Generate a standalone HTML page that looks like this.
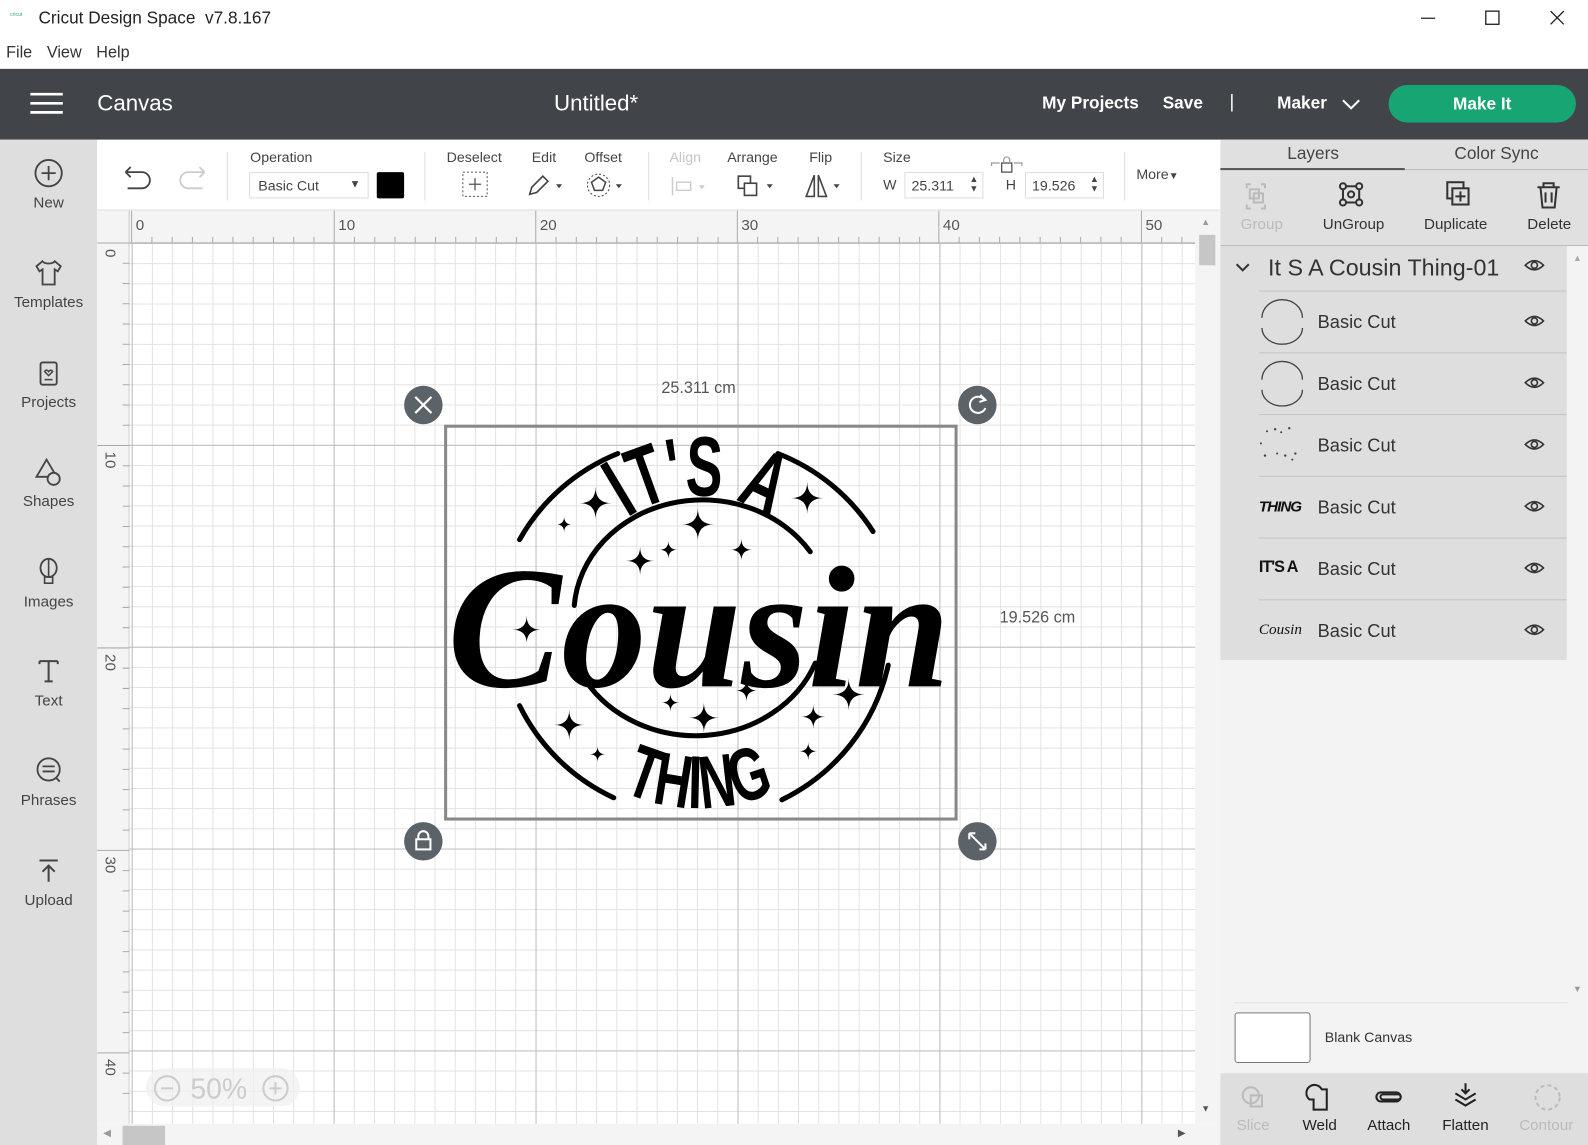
<!DOCTYPE html>
<html><head><meta charset="utf-8">
<style>
*{box-sizing:border-box;margin:0;padding:0}
html,body{width:1588px;height:1145px;overflow:hidden;background:#fff;font-family:"Liberation Sans",sans-serif;color:#333}
#root{position:absolute;left:0;top:0;width:1568px;height:1131px;transform:scale(1.0128,1.0124);transform-origin:0 0;}
.a{position:absolute}
.side{left:0;top:138px;width:96px;height:993px;background:#dedede}
.sitem{position:absolute;left:0;width:96px;text-align:center;font-size:15px;color:#444}
.sitem svg{display:block;margin:0 auto 6px}
.tb{font-size:14px;color:#444}
.grid{left:128px;top:240px;width:1052px;height:870px;
background-color:#fff;
background-image:
linear-gradient(to right,#bdbdbd 1px,transparent 1px),
linear-gradient(to bottom,#bdbdbd 1px,transparent 1px),
linear-gradient(to right,#e2e2e2 1px,transparent 1px),
linear-gradient(to bottom,#e2e2e2 1px,transparent 1px);
background-size:199.4px 199.4px,199.4px 199.4px,19.94px 19.94px,19.94px 19.94px;
background-position:2px 0,0 0,2px 0,0 0;}
.layer{position:absolute;left:38px;width:304px;height:61px;border-top:1px solid #c4c4c4}
.layer .t{position:absolute;left:58px;top:20px;font-size:18px;color:#333}
.eye{position:absolute}
</style></head><body><div id="root">

<div class="a" style="left:10px;top:12px;width:18px;height:10px;font-size:5px;color:#3a8">cricut</div>
<div class="a" style="left:38px;top:8px;font-size:17px;color:#222">Cricut Design Space&nbsp; v7.8.167</div>
<svg class="a" style="left:1395px;top:5px" width="160" height="26"><path d="M8 13h14" stroke="#222" stroke-width="1.3"/><rect x="72" y="6" width="13" height="13" fill="none" stroke="#222" stroke-width="1.3"/><path d="M136 6l13 13M149 6l-13 13" stroke="#222" stroke-width="1.3"/></svg>
<div class="a" style="left:6px;top:44px;font-size:16px;color:#333;word-spacing:10px">File View Help</div>

<div class="a" style="left:0;top:68px;width:1568px;height:70px;background:#414549"></div>
<svg class="a" style="left:28px;top:90px" width="36" height="24"><path d="M2 3h32M2 12h32M2 21h32" stroke="#fff" stroke-width="2.6"/></svg>
<div class="a" style="left:96px;top:89px;font-size:22px;color:#fff">Canvas</div>
<div class="a" style="left:547px;top:89px;font-size:22px;color:#fff">Untitled*</div>
<div class="a" style="left:1029px;top:92px;font-size:17px;color:#fff;font-weight:bold">My Projects</div>
<div class="a" style="left:1148px;top:92px;font-size:17px;color:#fff;font-weight:bold">Save</div>
<div class="a" style="left:1214px;top:90px;font-size:18px;color:#fff">|</div>
<div class="a" style="left:1261px;top:92px;font-size:17px;color:#fff;font-weight:bold">Maker</div>
<svg class="a" style="left:1324px;top:96px" width="20" height="14"><path d="M2 3l8 8 8-8" stroke="#fff" stroke-width="2" fill="none"/></svg>
<div class="a" style="left:1371px;top:84px;width:185px;height:37px;border-radius:19px;background:#17a673;color:#fff;font-weight:bold;font-size:17px;text-align:center;line-height:37px">Make It</div>

<div class="a side"></div>
<div class="sitem" style="top:156px"><svg width="30" height="30"><circle cx="15" cy="15" r="13" fill="none" stroke="#444" stroke-width="1.8"/><path d="M15 8v14M8 15h14" stroke="#444" stroke-width="1.8"/></svg>New</div>
<div class="sitem" style="top:254px"><svg width="30" height="30"><path d="M9 4l-6 5 3 5 3-2v15h12V12l3 2 3-5-6-5c-2 3-10 3-12 0z" fill="none" stroke="#444" stroke-width="1.8"/></svg>Templates</div>
<div class="sitem" style="top:353px"><svg width="30" height="30"><rect x="7" y="5" width="16" height="22" rx="2" fill="none" stroke="#444" stroke-width="1.8"/><path d="M11 14c2-3 4 0 4 0s2-3 4 0l-4 4z" fill="none" stroke="#444" stroke-width="1.5"/><path d="M11 22h8" stroke="#444" stroke-width="1.5"/></svg>Projects</div>
<div class="sitem" style="top:451px"><svg width="30" height="30"><path d="M13 3L3 20h20z" fill="none" stroke="#444" stroke-width="1.8"/><circle cx="20" cy="22" r="6" fill="#dedede" stroke="#444" stroke-width="1.8"/></svg>Shapes</div>
<div class="sitem" style="top:550px"><svg width="30" height="30"><ellipse cx="15" cy="11" rx="8" ry="9" fill="none" stroke="#444" stroke-width="1.8"/><path d="M15 2v18M11 20h8v6h-8z" fill="none" stroke="#444" stroke-width="1.6"/></svg>Images</div>
<div class="sitem" style="top:648px"><svg width="30" height="30"><path d="M6 5h18M15 5v20M6 5v3M24 5v3M11 25h8" fill="none" stroke="#444" stroke-width="2"/></svg>Text</div>
<div class="sitem" style="top:746px"><svg width="30" height="30"><circle cx="15" cy="14" r="11" fill="none" stroke="#444" stroke-width="1.8"/><path d="M9 11h12M9 16h12M22 22l4 4" stroke="#444" stroke-width="1.8"/></svg>Phrases</div>
<div class="sitem" style="top:845px"><svg width="30" height="30"><path d="M6 5h18M15 26V10M9 16l6-6 6 6" fill="none" stroke="#444" stroke-width="2"/></svg>Upload</div>

<div class="a" style="left:96px;top:138px;width:1109px;height:70px;background:#fff;border-bottom:1px solid #ddd"></div>
<svg class="a" style="left:118px;top:162px" width="90" height="30"><path d="M6 8h16a8 8 0 0 1 0 16h-14M6 8l5-5M6 8l5 5" fill="none" stroke="#444" stroke-width="1.8"/><path d="M84 8h-16a8 8 0 0 0 0 16h14M84 8l-5-5M84 8l-5 5" fill="none" stroke="#ccc" stroke-width="1.8"/></svg>
<div class="a" style="left:224px;top:150px;width:1px;height:48px;background:#ddd"></div>
<div class="a tb" style="left:247px;top:147px">Operation</div>
<div class="a tb" style="left:246px;top:170px;width:118px;height:26px;border:1px solid #ddd;padding:4px 8px">Basic Cut<span style="position:absolute;right:7px;top:5px;font-size:11px">▼</span></div>
<div class="a" style="left:372px;top:170px;width:27px;height:26px;background:#000;border-radius:2px"></div>
<div class="a" style="left:419px;top:150px;width:1px;height:48px;background:#ddd"></div>
<div class="a tb" style="left:441px;top:147px">Deselect</div>
<svg class="a" style="left:455px;top:168px" width="28" height="28"><rect x="2" y="2" width="24" height="24" fill="none" stroke="#555" stroke-dasharray="2 2"/><path d="M14 8v12M8 14h12" stroke="#555" stroke-width="1.3"/></svg>
<div class="a tb" style="left:525px;top:147px">Edit</div>
<svg class="a" style="left:518px;top:170px" width="42" height="26"><path d="M5 22l2-7 11-11 5 5-11 11z" fill="none" stroke="#444" stroke-width="1.6"/><path d="M31 12l3 4 3-4z" fill="#444"/></svg>
<div class="a tb" style="left:577px;top:147px">Offset</div>
<svg class="a" style="left:576px;top:170px" width="44" height="28"><path d="M15 5l7 5-3 8h-8l-3-8z" fill="none" stroke="#444" stroke-width="1.5"/><circle cx="15" cy="13" r="11" fill="none" stroke="#444" stroke-dasharray="2 2"/><path d="M32 12l3 4 3-4z" fill="#444"/></svg>
<div class="a" style="left:640px;top:150px;width:1px;height:48px;background:#ddd"></div>
<div class="a tb" style="left:661px;top:147px;color:#c4c4c4">Align</div>
<svg class="a" style="left:660px;top:172px" width="40" height="24"><path d="M4 3v18" stroke="#ccc" stroke-width="1.5"/><rect x="8" y="8" width="14" height="8" fill="none" stroke="#ccc" stroke-width="1.4"/><path d="M30 11l3 4 3-4z" fill="#ccc"/></svg>
<div class="a tb" style="left:718px;top:147px">Arrange</div>
<svg class="a" style="left:726px;top:170px" width="42" height="28"><rect x="3" y="4" width="12" height="12" fill="none" stroke="#444" stroke-width="1.6"/><rect x="9" y="11" width="12" height="12" fill="#fff" stroke="#444" stroke-width="1.6"/><path d="M31 12l3 4 3-4z" fill="#444"/></svg>
<div class="a tb" style="left:799px;top:147px">Flip</div>
<svg class="a" style="left:793px;top:170px" width="42" height="28"><path d="M11 3L3 24h8zM15 3l8 21h-8z" fill="none" stroke="#444" stroke-width="1.6"/><path d="M30 12l3 4 3-4z" fill="#444"/></svg>
<div class="a" style="left:850px;top:150px;width:1px;height:48px;background:#ddd"></div>
<div class="a tb" style="left:872px;top:147px">Size</div>
<div class="a tb" style="left:872px;top:174px">W</div>
<div class="a tb" style="left:893px;top:170px;width:78px;height:26px;border:1px solid #ddd;padding:4px 6px">25.311<span style="position:absolute;right:4px;top:2px;font-size:9px;line-height:9px">▲<br>▼</span></div>
<svg class="a" style="left:976px;top:152px" width="36" height="22"><rect x="13" y="9" width="10" height="9" fill="none" stroke="#555" stroke-width="1.3"/><path d="M15 9V6a3 3 0 0 1 6 0v3M3 12V9h8M33 12V9h-8" fill="none" stroke="#999" stroke-width="1.2"/></svg>
<div class="a tb" style="left:993px;top:174px">H</div>
<div class="a tb" style="left:1012px;top:170px;width:78px;height:26px;border:1px solid #ddd;padding:4px 6px">19.526<span style="position:absolute;right:4px;top:2px;font-size:9px;line-height:9px">▲<br>▼</span></div>
<div class="a" style="left:1110px;top:150px;width:1px;height:48px;background:#ddd"></div>
<div class="a tb" style="left:1122px;top:164px">More<span style="font-size:10px">▼</span></div>

<div class="a" style="left:96px;top:208px;width:1084px;height:32px;background:#f4f4f4;border-bottom:1px solid #c8c8c8"></div>
<div class="a" style="left:96px;top:208px;width:32px;height:902px;background:#f4f4f4;border-right:1px solid #c8c8c8"></div>
<svg class="a" style="left:96px;top:208px" width="1084" height="902">
<g stroke="#aaa" stroke-width="1">
<path d="M34 0v32M234 0v32M433 0v32M632 0v32M831 0v32M1031 0v32"/>
<path d="M0 32h32M0 232h32M0 432h32M0 632h32M0 832h32"/>
<path d="M54 26v6M74 26v6M94 26v6M114 26v6M134 26v6M154 26v6M174 26v6M194 26v6M214 26v6M254 26v6M274 26v6M294 26v6M314 26v6M334 26v6M354 26v6M374 26v6M394 26v6M414 26v6M453 26v6M473 26v6M493 26v6M513 26v6M533 26v6M553 26v6M573 26v6M593 26v6M613 26v6M652 26v6M672 26v6M692 26v6M712 26v6M732 26v6M752 26v6M772 26v6M792 26v6M812 26v6M851 26v6M871 26v6M891 26v6M911 26v6M931 26v6M951 26v6M971 26v6M991 26v6M1011 26v6M1051 26v6M1071 26v6"/>
<path d="M25 52h7M25 72h7M25 92h7M25 112h7M25 132h7M25 152h7M25 172h7M25 192h7M25 212h7M25 252h7M25 272h7M25 292h7M25 312h7M25 332h7M25 352h7M25 372h7M25 392h7M25 412h7M25 452h7M25 472h7M25 492h7M25 512h7M25 532h7M25 552h7M25 572h7M25 592h7M25 612h7M25 652h7M25 672h7M25 692h7M25 712h7M25 732h7M25 752h7M25 772h7M25 792h7M25 812h7M25 852h7M25 872h7"/>
</g>
<g font-size="15" fill="#555" font-family="Liberation Sans">
<text x="38" y="19">0</text><text x="238" y="19">10</text><text x="437" y="19">20</text><text x="636" y="19">30</text><text x="835" y="19">40</text><text x="1035" y="19">50</text>
<text transform="translate(8,38) rotate(90)">0</text><text transform="translate(8,238) rotate(90)">10</text><text transform="translate(8,438) rotate(90)">20</text><text transform="translate(8,638) rotate(90)">30</text><text transform="translate(8,838) rotate(90)">40</text>
</g></svg>

<div class="a grid"></div>
<div class="a" style="left:1180px;top:208px;width:25px;height:902px;background:#f4f4f4"></div>
<div class="a" style="left:1184px;top:232px;width:16px;height:30px;background:#c6c6c6"></div>
<div class="a" style="left:1186px;top:214px;font-size:9px;color:#999">▲</div>
<div class="a" style="left:1186px;top:1090px;font-size:9px;color:#555">▼</div>
<div class="a" style="left:96px;top:1110px;width:1109px;height:21px;background:#f4f4f4"></div>
<div class="a" style="left:121px;top:1112px;width:42px;height:19px;background:#c6c6c6"></div>
<div class="a" style="left:102px;top:1114px;font-size:10px;color:#999">◀</div>
<div class="a" style="left:1163px;top:1114px;font-size:10px;color:#555">▶</div>
<div class="a" style="left:144px;top:1055px;width:152px;height:38px;border-radius:19px;background:rgba(240,240,240,.7)"></div>
<svg class="a" style="left:150px;top:1060px" width="140" height="30"><circle cx="15" cy="15" r="12" fill="none" stroke="#ccc" stroke-width="2"/><path d="M9 15h12" stroke="#ccc" stroke-width="2"/><circle cx="122" cy="15" r="12" fill="none" stroke="#ccc" stroke-width="2"/><path d="M116 15h12M122 9v12" stroke="#ccc" stroke-width="2"/><text x="38" y="25" font-size="28" fill="#ccc" font-family="Liberation Sans">50%</text></svg>

<svg class="a" style="left:0;top:0" width="1205" height="1131">
<defs>
<path id="topArc" d="M598 530 A125 125 0 0 1 782 530"/>
<path id="botArc" d="M540 720 A183 183 0 0 0 840 720"/>
</defs>
<rect x="440" y="421" width="504" height="388" fill="none" stroke="#888" stroke-width="3"/>
<text x="653" y="388" font-size="16" fill="#555" font-family="Liberation Sans">25.311 cm</text>
<text x="987" y="615" font-size="16" fill="#555" font-family="Liberation Sans">19.526 cm</text>
<g fill="none" stroke="#000" stroke-width="5" stroke-linecap="round">
<path d="M513 533 A195 195 0 0 1 610 448"/>
<path d="M768 448 A195 195 0 0 1 862 525"/>
<path d="M513 697 A195 195 0 0 0 606 788"/>
<path d="M772 790 A195 195 0 0 0 877 657"/>
<path d="M567 598 A127 113 0 0 1 800 545"/>
<path d="M805 655 A127 113 0 0 1 578 672"/>
</g>
<text font-size="84" font-weight="bold" font-family="Liberation Sans" fill="#000"><textPath href="#topArc" startOffset="50%" text-anchor="middle" textLength="150" lengthAdjust="spacingAndGlyphs">IT'S A</textPath></text>
<text font-size="74" font-weight="bold" font-family="Liberation Sans" fill="#000"><textPath href="#botArc" startOffset="50%" text-anchor="middle" textLength="155" lengthAdjust="spacingAndGlyphs">THING</textPath></text>
<g fill="#000">
<path d="M588 481Q588 497 604 497Q588 497 588 513Q588 497 572 497Q588 497 588 481Z"/>
<path d="M797 476Q797 492 813 492Q797 492 797 508Q797 492 781 492Q797 492 797 476Z"/>
<path d="M557 510Q557 518 565 518Q557 518 557 526Q557 518 549 518Q557 518 557 510Z"/>
<path d="M689 502Q689 518 705 518Q689 518 689 534Q689 518 673 518Q689 518 689 502Z"/>
<path d="M632 540Q632 554 646 554Q632 554 632 568Q632 554 618 554Q632 554 632 540Z"/>
<path d="M660 534Q660 543 669 543Q660 543 660 552Q660 543 651 543Q660 543 660 534Z"/>
<path d="M732 532Q732 543 743 543Q732 543 732 554Q732 543 721 543Q732 543 732 532Z"/>
<path d="M520 608Q520 622 534 622Q520 622 520 636Q520 622 506 622Q520 622 520 608Z"/>
<path d="M662 685Q662 694 671 694Q662 694 662 703Q662 694 653 694Q662 694 662 685Z"/>
<path d="M737 671Q737 682 748 682Q737 682 737 693Q737 682 726 682Q737 682 737 671Z"/>
<path d="M695 694Q695 709 710 709Q695 709 695 724Q695 709 680 709Q695 709 695 694Z"/>
<path d="M838 670Q838 686 854 686Q838 686 838 702Q838 686 822 686Q838 686 838 670Z"/>
<path d="M562 701Q562 716 577 716Q562 716 562 731Q562 716 547 716Q562 716 562 701Z"/>
<path d="M803 696Q803 708 815 708Q803 708 803 720Q803 708 791 708Q803 708 803 696Z"/>
<path d="M590 737Q590 745 598 745Q590 745 590 753Q590 745 582 745Q590 745 590 737Z"/>
<path d="M798 733Q798 742 807 742Q798 742 798 751Q798 742 789 742Q798 742 798 733Z"/>
</g>
<text x="442" y="678" font-size="172" font-weight="bold" font-style="italic" font-family="Liberation Serif" fill="#000" textLength="496" lengthAdjust="spacingAndGlyphs">Cousin</text>
<circle cx="418" cy="400" r="19" fill="#5b6268"/><path d="M410 392l16 16M426 392l-16 16" stroke="#fff" stroke-width="2.2"/>
<circle cx="965" cy="400" r="19" fill="#5b6268"/><path d="M972 395a8 8 0 1 0 1 8" fill="none" stroke="#fff" stroke-width="2"/><path d="M968 390l5 5-6 2" fill="none" stroke="#fff" stroke-width="2"/>
<circle cx="418" cy="831" r="19" fill="#5b6268"/><rect x="411" y="829" width="14" height="10" fill="none" stroke="#fff" stroke-width="2"/><path d="M413 829v-3a5 5 0 0 1 10 0v3" fill="none" stroke="#fff" stroke-width="2"/>
<circle cx="965" cy="831" r="19" fill="#5b6268"/><path d="M957 823l16 16M957 823h6M957 823v6M973 839h-6M973 839v-6" stroke="#fff" stroke-width="2" fill="none"/>
</svg>

<div class="a" style="left:1205px;top:138px;width:363px;height:993px;background:#f3f3f3"></div>
<div class="a" style="left:1205px;top:138px;width:363px;height:104px;background:#e0e0e0"></div>
<div class="a" style="left:1205px;top:167px;width:363px;height:1px;background:#bbb"></div>
<div class="a" style="left:1205px;top:166px;width:182px;height:2px;background:#555"></div>
<div class="a" style="left:1271px;top:142px;font-size:17px;color:#444">Layers</div>
<div class="a" style="left:1436px;top:142px;font-size:17px;color:#444">Color Sync</div>
<div class="a" style="left:1205px;top:242px;width:363px;height:1px;background:#bbb"></div>
<svg class="a" style="left:1205px;top:176px" width="363" height="36">
<g fill="none" stroke-width="2">
<g stroke="#bbb"><path d="M30 6h-4v4M40 6h4v4M30 30h-4v-4M40 30h4v-4"/><rect x="29" y="11" width="9" height="9"/><rect x="33" y="15" width="9" height="9"/></g>
<g stroke="#333"><rect x="121" y="8" width="16" height="16"/><circle cx="121" cy="8" r="3" fill="#e0e0e0"/><circle cx="137" cy="8" r="3" fill="#e0e0e0"/><circle cx="121" cy="24" r="3" fill="#e0e0e0"/><circle cx="137" cy="24" r="3" fill="#e0e0e0"/><circle cx="129" cy="16" r="3" fill="#e0e0e0"/>
<rect x="224" y="4" width="16" height="16"/><rect x="229" y="10" width="16" height="16" fill="#e0e0e0"/><path d="M237 13v10M232 18h10"/>
<path d="M313 9h22M319 9V5h10v4M316 9l2 20h12l2-20M321 14v10M327 14v10"/></g></g></svg>
<div class="a" style="left:1225px;top:213px;font-size:15px;color:#bbb">Group</div>
<div class="a" style="left:1306px;top:213px;font-size:15px;color:#333">UnGroup</div>
<div class="a" style="left:1406px;top:213px;font-size:15px;color:#333">Duplicate</div>
<div class="a" style="left:1508px;top:213px;font-size:15px;color:#333">Delete</div>

<div class="a" style="left:1205px;top:243px;width:342px;height:409px;background:#dedede">
<svg class="a" style="left:14px;top:16px" width="16" height="12"><path d="M2 2l6 6 6-6" fill="none" stroke="#333" stroke-width="2"/></svg>
<div class="a" style="left:47px;top:8px;font-size:23px;color:#333">It S A Cousin Thing-01</div>
<svg class="eye" style="left:299px;top:12px" width="22" height="14"><path d="M2 7q9-9 18 0q-9 9-18 0z" fill="none" stroke="#333" stroke-width="1.6"/><circle cx="11" cy="7" r="3" fill="none" stroke="#333" stroke-width="1.6"/></svg>
<div class="layer" style="top:44px"><svg class="a" style="left:0;top:6px" width="46" height="48"><path d="M3 20a20 18 0 0 1 40 0M43 30a20 16 0 0 1-40 0" fill="none" stroke="#444" stroke-width="1.3"/></svg><div class="t">Basic Cut</div><svg class="eye" style="left:261px;top:22px" width="22" height="14"><path d="M2 7q9-9 18 0q-9 9-18 0z" fill="none" stroke="#333" stroke-width="1.6"/><circle cx="11" cy="7" r="3" fill="none" stroke="#333" stroke-width="1.6"/></svg></div>
<div class="layer" style="top:105px"><svg class="a" style="left:0;top:6px" width="46" height="48"><path d="M3 20a20 18 0 0 1 40 0M43 30a20 16 0 0 1-40 0" fill="none" stroke="#444" stroke-width="1.3"/></svg><div class="t">Basic Cut</div><svg class="eye" style="left:261px;top:22px" width="22" height="14"><path d="M2 7q9-9 18 0q-9 9-18 0z" fill="none" stroke="#333" stroke-width="1.6"/><circle cx="11" cy="7" r="3" fill="none" stroke="#333" stroke-width="1.6"/></svg></div>
<div class="layer" style="top:166px"><svg class="a" style="left:0;top:8px" width="46" height="44"><g fill="#444"><circle cx="8" cy="8" r="1"/><circle cx="16" cy="6" r="1.2"/><circle cx="22" cy="9" r="1"/><circle cx="30" cy="5" r="1.2"/><circle cx="2" cy="20" r="1"/><circle cx="6" cy="32" r="1.2"/><circle cx="18" cy="30" r="1"/><circle cx="26" cy="32" r="1.2"/><circle cx="36" cy="30" r="1.2"/><circle cx="33" cy="36" r="1"/></g></svg><div class="t">Basic Cut</div><svg class="eye" style="left:261px;top:22px" width="22" height="14"><path d="M2 7q9-9 18 0q-9 9-18 0z" fill="none" stroke="#333" stroke-width="1.6"/><circle cx="11" cy="7" r="3" fill="none" stroke="#333" stroke-width="1.6"/></svg></div>
<div class="layer" style="top:227px"><div class="a" style="left:0;top:21px;font-size:15px;font-weight:bold;font-style:italic;color:#111;letter-spacing:-1px">THING</div><div class="t">Basic Cut</div><svg class="eye" style="left:261px;top:22px" width="22" height="14"><path d="M2 7q9-9 18 0q-9 9-18 0z" fill="none" stroke="#333" stroke-width="1.6"/><circle cx="11" cy="7" r="3" fill="none" stroke="#333" stroke-width="1.6"/></svg></div>
<div class="layer" style="top:288px"><div class="a" style="left:0;top:20px;font-size:16px;font-weight:bold;color:#111;letter-spacing:-1px">IT'S A</div><div class="t">Basic Cut</div><svg class="eye" style="left:261px;top:22px" width="22" height="14"><path d="M2 7q9-9 18 0q-9 9-18 0z" fill="none" stroke="#333" stroke-width="1.6"/><circle cx="11" cy="7" r="3" fill="none" stroke="#333" stroke-width="1.6"/></svg></div>
<div class="layer" style="top:349px"><div class="a" style="left:0;top:21px;font-size:15px;font-style:italic;font-family:'Liberation Serif',serif;color:#111">Cousin</div><div class="t">Basic Cut</div><svg class="eye" style="left:261px;top:22px" width="22" height="14"><path d="M2 7q9-9 18 0q-9 9-18 0z" fill="none" stroke="#333" stroke-width="1.6"/><circle cx="11" cy="7" r="3" fill="none" stroke="#333" stroke-width="1.6"/></svg></div>
</div>
<div class="a" style="left:1553px;top:250px;font-size:9px;color:#aaa">▲</div>
<div class="a" style="left:1553px;top:972px;font-size:9px;color:#999">▼</div>
<div class="a" style="left:1218px;top:990px;width:330px;height:1px;background:#e4e4e4"></div>
<div class="a" style="left:1219px;top:1000px;width:75px;height:50px;background:#fff;border:1px solid #777;border-radius:3px"></div>
<div class="a" style="left:1308px;top:1016px;font-size:14px;color:#333">Blank Canvas</div>
<div class="a" style="left:1205px;top:1060px;width:363px;height:71px;background:#dedede"></div>
<svg class="a" style="left:1205px;top:1066px" width="363" height="36"><g fill="none" stroke-width="2">
<g stroke="#bbb"><circle cx="30" cy="16" r="8"/><rect x="30" y="16" width="11" height="11"/></g>
<g stroke="#222"><path d="M88 20a8 8 0 1 1 12-10h5v20H92v-10z"/><rect x="154" y="13" width="24" height="9" rx="4.5"/><rect x="158" y="15" width="20" height="5" rx="2.5"/><path d="M242 4v10M238 10l4 4 4-4M232 14l10 6 10-6M232 20l10 6 10-6"/></g>
<circle cx="323" cy="18" r="12" stroke="#bbb" stroke-dasharray="4 3"/></g></svg>
<div class="a" style="left:1221px;top:1103px;font-size:15px;color:#bbb">Slice</div>
<div class="a" style="left:1286px;top:1103px;font-size:15px;color:#222">Weld</div>
<div class="a" style="left:1350px;top:1103px;font-size:15px;color:#222">Attach</div>
<div class="a" style="left:1424px;top:1103px;font-size:15px;color:#222">Flatten</div>
<div class="a" style="left:1500px;top:1103px;font-size:15px;color:#bbb">Contour</div>
</div></body></html>
